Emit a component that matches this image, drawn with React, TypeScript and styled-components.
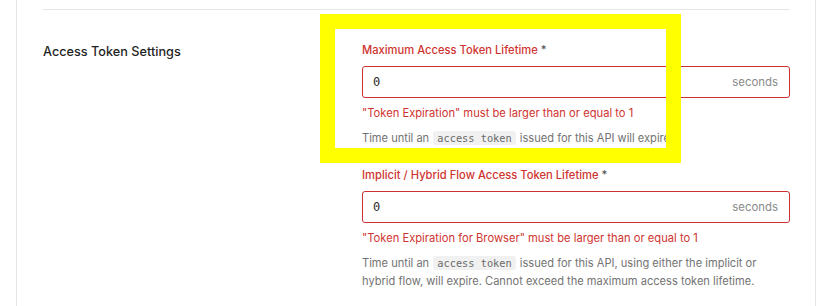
import React from "react"
import styled, { createGlobalStyle } from "styled-components"

const GlobalStyle = createGlobalStyle`
  html, body {
    margin: 0;
    padding: 0;
    background: #ffffff;
  }
  body {
    font-family: Inter, "Noto Sans", sans-serif;
    -webkit-font-smoothing: antialiased;
  }
`

interface FieldProps {
  label: string
  value: string
  unit: string
  error: string
  children: React.ReactNode
}

const Field = ({ label, value, unit, error, children }: FieldProps) => (
  <FieldBlock>
    <Label>
      {label}
      <Required>*</Required>
    </Label>
    <InputBox>
      <InputValue>{value}</InputValue>
      <Unit>{unit}</Unit>
    </InputBox>
    <ErrorText>{error}</ErrorText>
    <HelpText>{children}</HelpText>
  </FieldBlock>
)

export default function App() {
  return (
    <>
      <GlobalStyle />
      <Page>
        <Card>
          <Divider />
          <SettingsRow>
            <SectionTitle>Access Token Settings</SectionTitle>
            <Fields>
              <Field
                label="Maximum Access Token Lifetime"
                value="0"
                unit="seconds"
                error={'"Token Expiration" must be larger than or equal to 1'}
              >
                Time until an <Code>access token</Code> issued for this API
                will expire.
              </Field>
              <Field
                label="Implicit / Hybrid Flow Access Token Lifetime"
                value="0"
                unit="seconds"
                error={
                  '"Token Expiration for Browser" must be larger than or equal to 1'
                }
              >
                Time until an <Code>access token</Code> issued for this API,
                using either the implicit or hybrid flow, will expire. Cannot
                exceed the maximum access token lifetime.
              </Field>
            </Fields>
          </SettingsRow>
          <Highlight />
        </Card>
      </Page>
    </>
  )
}

const Page = styled.div`
  width: 818px;
  height: 306px;
  overflow: hidden;
  padding: 0 2px 0 16px;
  box-sizing: border-box;
`

const Card = styled.div`
  position: relative;
  height: 100%;
  box-sizing: border-box;
  border-left: 1px solid #e6e6e6;
  border-right: 1px solid #e6e6e6;
  padding: 9px 25px 0 26px;
`

const Divider = styled.div`
  height: 1px;
  background: #e6e6e6;
`

const SettingsRow = styled.div`
  display: grid;
  grid-template-columns: 319px 1fr;
  padding-top: 32px;
`

const SectionTitle = styled.h3`
  margin: 0;
  padding-top: 1px;
  font-size: 12.7px;
  line-height: 18px;
  font-weight: 500;
  color: #1f1f1f;
`

const Fields = styled.div`
  display: flex;
  flex-direction: column;
  gap: 20px;
`

const FieldBlock = styled.div`
  display: flex;
  flex-direction: column;
`

const Label = styled.label`
  font-size: 11.2px;
  line-height: 16px;
  font-weight: 500;
  color: #cf3530;
`

const Required = styled.span`
  margin-left: 3px;
  color: #555555;
`

const InputBox = styled.div`
  display: flex;
  align-items: center;
  justify-content: space-between;
  height: 32px;
  margin-top: 8px;
  padding: 0 11px 0 10px;
  box-sizing: border-box;
  border: 1px solid #cc3030;
  border-radius: 3px;
`

const InputValue = styled.span`
  font-family: "DejaVu Sans Mono", "Liberation Mono", monospace;
  font-size: 12px;
  color: #2a2a2a;
`

const Unit = styled.span`
  font-size: 11.4px;
  color: #8a8a8a;
`

const ErrorText = styled.div`
  margin-top: 7px;
  font-size: 11.2px;
  line-height: 16px;
  color: #cf3530;
`

const HelpText = styled.p`
  margin: 8px 0 0;
  font-size: 11.1px;
  line-height: 18px;
  color: #737373;
`

const Code = styled.code`
  display: inline-block;
  margin: 0 1px;
  padding: 0 4px;
  line-height: 14px;
  font-family: "DejaVu Sans Mono", "Liberation Mono", monospace;
  font-size: 10.3px;
  color: #6a6a6a;
  background: #f1f1f1;
  border-radius: 3px;
`

const Highlight = styled.div`
  position: absolute;
  left: 303px;
  top: 14px;
  width: 361px;
  height: 149px;
  box-sizing: border-box;
  border: 15px solid #ffff00;
  pointer-events: none;
`
